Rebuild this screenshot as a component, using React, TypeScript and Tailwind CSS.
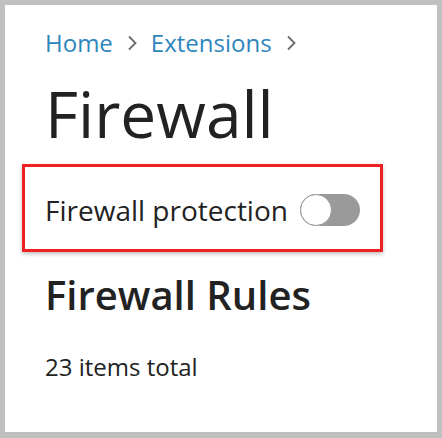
import { useState } from "react";

function Chevron() {
  return (
    <svg width="10" height="16" viewBox="0 0 10 16" className="mx-[14px] text-[#6b6b6b]" aria-hidden>
      <path d="M2 1.5 L8.5 8 L2 14.5" fill="none" stroke="currentColor" strokeWidth="1.8" />
    </svg>
  );
}

export default function App() {
  const [enabled, setEnabled] = useState(false);

  return (
    <div
      className="h-[438px] w-[442px] border-[5px] border-b-[6px] border-[#c0c0c0] bg-white pl-[40px] text-[#222]"
      style={{ fontFamily: '"Open Sans", "Noto Sans", sans-serif' }}
    >
      <nav className="mt-[22px] flex h-[32px] items-center text-[24px] leading-[32px]">
        <a className="text-[#2e86bd]" href="#">Home</a>
        <Chevron />
        <a className="text-[#2e86bd]" href="#">Extensions</a>
        <Chevron />
      </nav>

      <h1 className="mt-[16px] text-[64px] leading-[77px] font-normal">Firewall</h1>

      <div className="mt-[12px] -ml-[23px] flex h-[88px] w-[361px] items-center border-[3px] border-[#ee2020] pl-[20px] pt-[4px] shadow-[0_2px_4px_rgba(0,0,0,0.25)]">
        <span className="text-[28px] leading-[42px]">Firewall protection</span>
        <button
          type="button"
          className={`relative ml-[12px] h-[32px] w-[60px] rounded-full ${enabled ? "bg-[#2e86bd]" : "bg-[#9a9a9a]"}`}
          onClick={() => setEnabled(!enabled)}
          aria-pressed={enabled}
        >
          <span
            className={`absolute top-0 h-[32px] w-[32px] rounded-full border-[1.5px] border-[#9a9a9a] bg-white ${enabled ? "right-0" : "left-0"}`}
          />
        </button>
      </div>

      <h2 className="mt-[19px] text-[40px] leading-[48px] font-semibold">Firewall Rules</h2>

      <p className="mt-[30px] text-[24px] leading-[36px]">23 items total</p>
    </div>
  );
}
